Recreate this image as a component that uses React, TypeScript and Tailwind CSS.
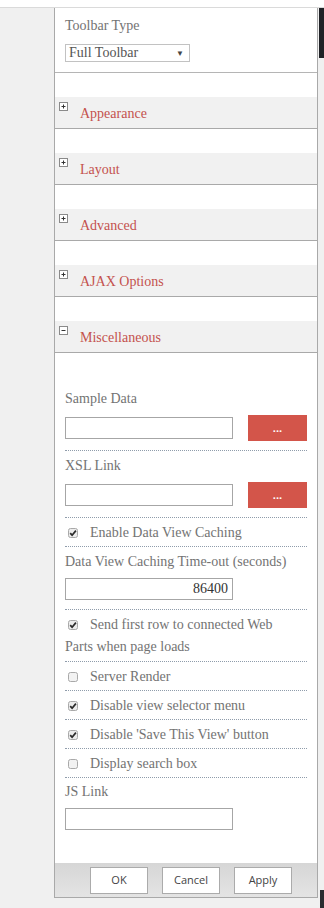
import React from "react";

const serif = { fontFamily: '"Liberation Serif", "Times New Roman", serif' };
const sans = { fontFamily: '"Open Sans", "Liberation Sans", Arial, sans-serif' };

const ToggleIcon = ({ open }: { open?: boolean }) => (
  <svg width="9" height="9" viewBox="0 0 9 9" className="block">
    <rect x="0.5" y="0.5" width="8" height="8" fill="#fff" stroke="#8a8a8a" />
    <line x1="2.5" y1="4.5" x2="6.5" y2="4.5" stroke="#333" strokeWidth="1" />
    {!open && <line x1="4.5" y1="2.5" x2="4.5" y2="6.5" stroke="#333" strokeWidth="1" />}
  </svg>
);

const Check = ({ checked }: { checked?: boolean }) => (
  <svg width="10" height="10" viewBox="0 0 10 10" className="block">
    <rect x="0.5" y="0.5" width="9" height="9" rx="2" fill={checked ? "#ececec" : "#f2f2f2"} stroke="#a9a9a9" />
    {checked && (
      <path d="M2.2 5.2 L4.1 7.2 L7.9 2.6" fill="none" stroke="#2b2b2b" strokeWidth="1.7" />
    )}
  </svg>
);

const SectionHeader = ({ title, open }: { title: string; open?: boolean }) => (
  <div className="mt-[24px] h-[32px] flex items-start bg-[#f1f1f1] border-b border-[#a9a9a9]">
    <div className="ml-[4px] mt-[5px]">
      <ToggleIcon open={open} />
    </div>
    <span className="ml-[12px] mt-[7px] text-[14px] leading-[20px] text-[#c4524e]" style={serif}>
      {title}
    </span>
  </div>
);

const dotted = "border-b border-dotted border-[#8f9cab]";
// text sits a little high in its line box, so labels get a taller line than their box
const label = "h-[20px] leading-[24px]";

const FieldWithButton = ({ text, first }: { text: string; first?: boolean }) => (
  <div className={`${dotted} ${first ? "" : "pt-[3px]"} pb-[9px]`}>
    <div className={label}>{text}</div>
    <div className="mt-[8px] flex items-center justify-between">
      <div className="w-[168px] h-[22px] border border-[#a6a6a6] bg-white" />
      <button className="w-[59px] h-[26px] bg-[#d3554a] text-white text-[11px] font-bold leading-[20px]" style={sans}>
        ...
      </button>
    </div>
  </div>
);

const CheckRow = ({ text, checked }: { text: string; checked?: boolean }) => (
  <div className={`${dotted} h-[29px] pt-[2px] flex items-center`}>
    <div className="ml-[3px]">
      <Check checked={checked} />
    </div>
    <span className="ml-[12px] leading-[20px]">{text}</span>
  </div>
);

export default function App() {
  return (
    <div className="w-[324px] h-[908px] overflow-hidden bg-[#f0f0f0] flex flex-col">
      <div className="h-[8px] bg-white border-b border-[#dadada] shrink-0" />
      <div className="flex flex-1 items-start">
        <div className="w-[54px] shrink-0" />
        <div
          className="w-[264px] h-[890px] shrink-0 bg-white border-l border-r border-b border-[#a9a9a9] flex flex-col text-[14px] text-[#737373]"
          style={serif}
        >
          <div className="h-[65px] border-b border-[#b5b5b5] px-[10px] pt-[6px]">
            <div className={label}>Toolbar Type</div>
            <div className="mt-[10px] w-[125px] h-[18px] border border-[#c2c2c2] flex items-center justify-between pl-[3px] pr-[5px] text-[#555]">
              <span className="leading-[18px]">Full Toolbar</span>
              <span className="text-[8px] text-[#444]" style={sans}>▼</span>
            </div>
          </div>

          <SectionHeader title="Appearance" />
          <SectionHeader title="Layout" />
          <SectionHeader title="Advanced" />
          <SectionHeader title="AJAX Options" />
          <SectionHeader title="Miscellaneous" open />

          <div className="pl-[10px] pr-[10px] pt-[34px]">
            <FieldWithButton text="Sample Data" first />
            <FieldWithButton text="XSL Link" />
            <CheckRow text="Enable Data View Caching" checked />
            <div className={`${dotted} pt-[3px] pb-[9px]`}>
              <div className={label}>Data View Caching Time-out (seconds)</div>
              <div className="mt-[8px] w-[168px] h-[22px] border border-[#a6a6a6] bg-white flex items-center justify-end pr-[4px] text-[#333] leading-[20px]">
                86400
              </div>
            </div>
            <div className={`${dotted} pt-[4px] pb-[3px]`}>
              <div className="flex items-center h-[22px]">
                <div className="ml-[3px]">
                  <Check checked />
                </div>
                <span className="ml-[12px] leading-[22px]">Send first row to connected Web</span>
              </div>
              <div className="h-[22px] leading-[22px]">Parts when page loads</div>
            </div>
            <CheckRow text="Server Render" />
            <CheckRow text="Disable view selector menu" checked />
            <CheckRow text="Disable 'Save This View' button" checked />
            <CheckRow text="Display search box" />
            <div className="pt-[2px]">
              <div className={label}>JS Link</div>
              <div className="mt-[8px] w-[168px] h-[22px] border border-[#a6a6a6] bg-white" />
            </div>
          </div>

          <div className="mt-auto h-[34px] bg-gradient-to-b from-[#d6d6d6] to-[#e4e4e4] flex items-center justify-end gap-[14px] pr-[25px]">
            {["OK", "Cancel", "Apply"].map((t) => (
              <button
                key={t}
                className="w-[58px] h-[27px] bg-white border border-[#ababab] text-[11px] text-[#444]"
                style={sans}
              >
                {t}
              </button>
            ))}
          </div>
        </div>
        <div className="flex-1 h-full flex flex-col">
          <div className="ml-[1px] h-[50px] bg-[#1f2226]" />
          <div className="flex-1" />
          <div className="ml-[2px] h-[18px] bg-[#2a2c30]" />
        </div>
      </div>
    </div>
  );
}
